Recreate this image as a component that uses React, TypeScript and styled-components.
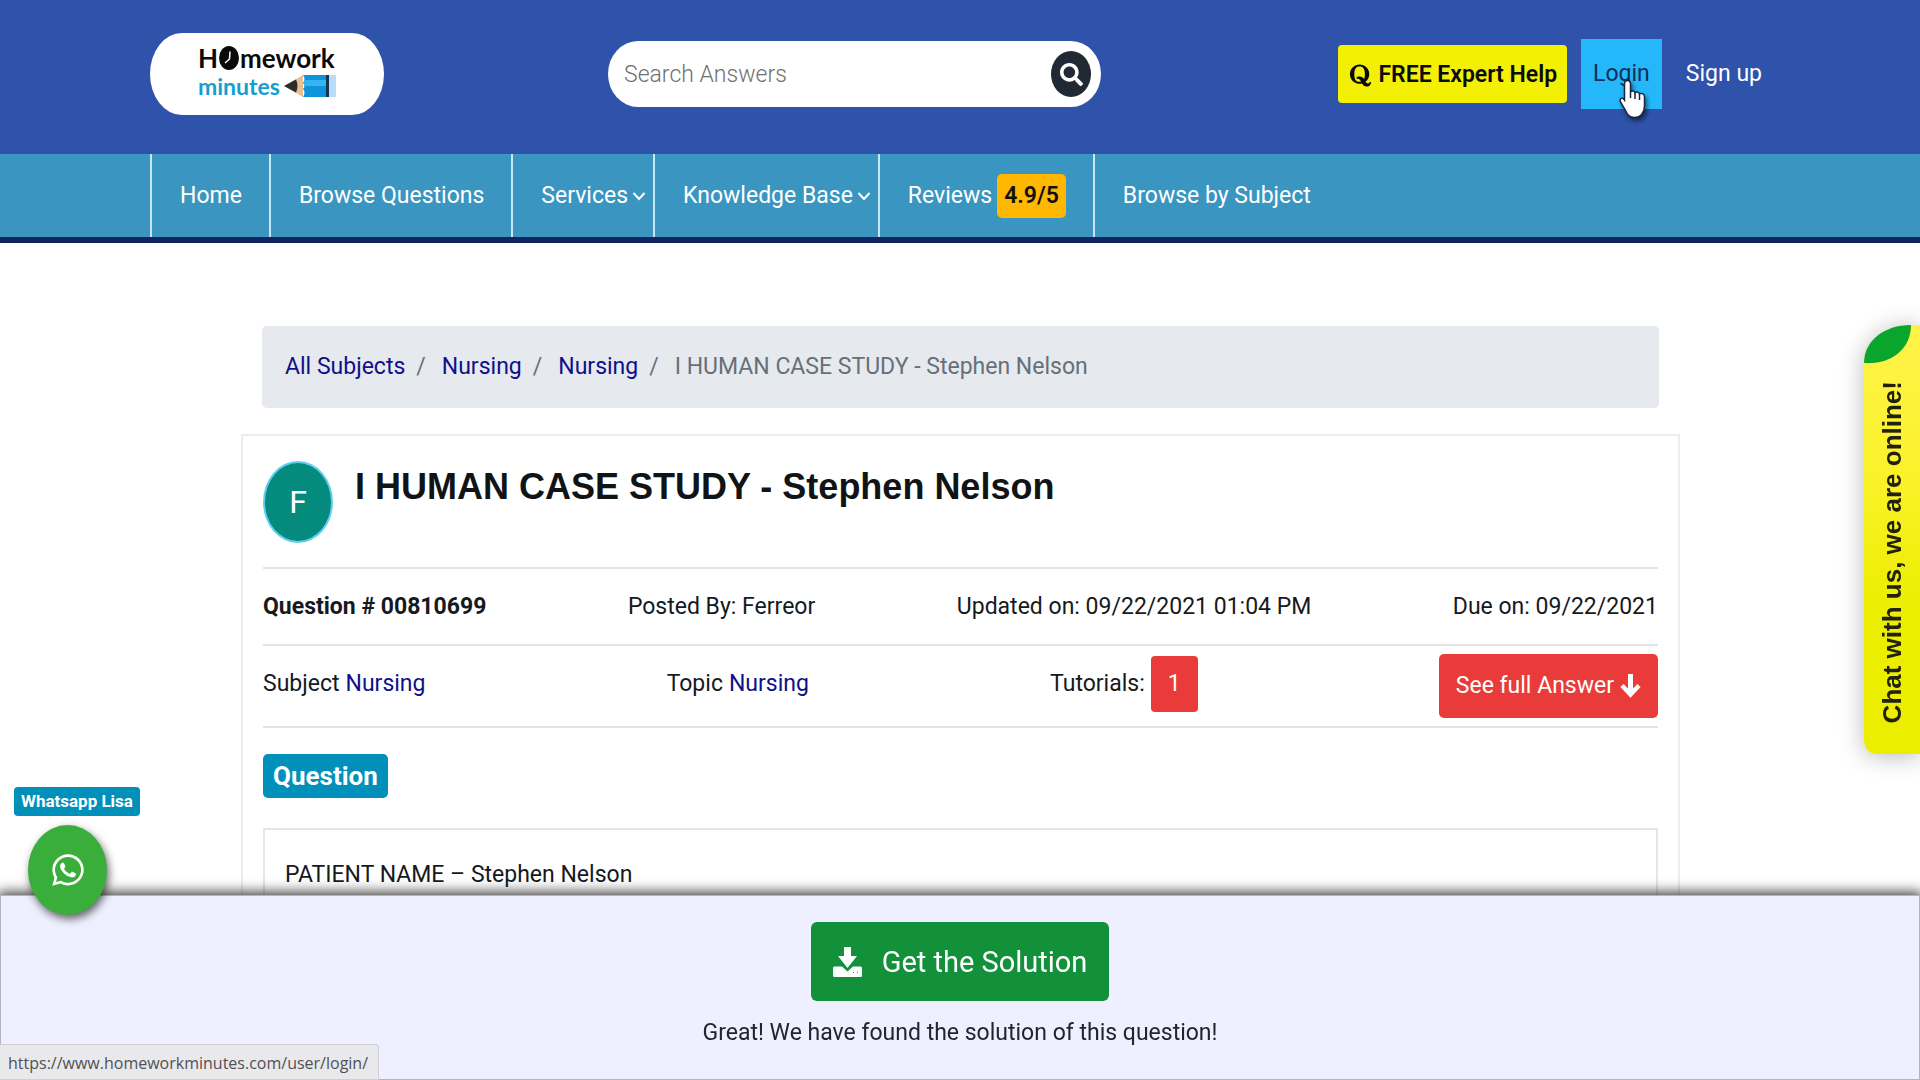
import React from "react";
import styled, { createGlobalStyle } from "styled-components";
import { FaQuora, FaSearch, FaWhatsapp } from "react-icons/fa";

const GlobalStyle = createGlobalStyle`
  *, *::before, *::after { box-sizing: border-box; }
  body {
    margin: 0;
    background: #fff;
    color: #16191d;
    font-family: Roboto, "Liberation Sans", sans-serif;
    font-size: 23px;
    line-height: 34px;
  }
  a { color: #10108a; text-decoration: none; }
  button, input { font: inherit; border: 0; }
  button { cursor: pointer; }
  svg { display: block; }
`;

const Page = styled.div`
  display: flex;
  flex-direction: column;
  min-height: 100vh;
`;

const Container = styled.div`
  width: 100%;
  max-width: 1620px;
  margin: 0 auto;
`;

const Header = styled.header`
  background: #2f52aa;
`;

const HeaderRow = styled(Container)`
  display: grid;
  grid-template-columns: 458px 493px 1fr;
  align-items: center;
  height: 154px;
  padding-bottom: 6px;
`;

const Logo = styled.a`
  display: flex;
  flex-direction: column;
  justify-content: center;
  width: 234px;
  height: 82px;
  padding: 0 0 4px 48px;
  border-radius: 32px / 41px;
  background: #fff;
  color: #0a0a0a;
  font: 700 26px/28px Lato, sans-serif;
`;

const LogoLine = styled.span<{ $blue?: boolean }>`
  display: flex;
  align-items: center;
  gap: ${(p) => (p.$blue ? "4px" : "1px")};
  font-size: ${(p) => (p.$blue ? "23px" : "26px")};
  color: ${(p) => (p.$blue ? "#149fd2" : "#0a0a0a")};
`;

const SearchForm = styled.form`
  display: flex;
  align-items: center;
  height: 66px;
  padding: 0 10px 0 16px;
  border-radius: 30px / 33px;
  background: #fff;
`;

const SearchInput = styled.input`
  flex: 1;
  min-width: 0;
  padding: 2px 0 0;
  background: transparent;
  outline: 0;
  font-weight: 300;
  color: #333;
  &::placeholder { color: #707070; opacity: 1; }
`;

const SearchButton = styled.button`
  display: grid;
  place-items: center;
  width: 40px;
  height: 46px;
  padding: 0;
  border-radius: 50%;
  background: #212a34;
  color: #fff;
`;

const Actions = styled.div`
  display: flex;
  align-items: center;
  justify-content: flex-end;
`;

const ExpertLink = styled.a`
  display: flex;
  align-items: center;
  gap: 5px;
  height: 58px;
  margin-right: 14px;
  padding: 2px 10px 0;
  border-radius: 4px;
  background: #f3f004;
  color: #0b0b0b;
  font-weight: 600;
  white-space: nowrap;
`;

const AccountLink = styled.a<{ $active?: boolean }>`
  position: relative;
  display: flex;
  align-items: center;
  height: 70px;
  margin-left: ${(p) => (p.$active ? "0" : "12px")};
  padding: ${(p) => (p.$active ? "0 12px" : "0 8px 0 12px")};
  background: ${(p) => (p.$active ? "#24b8fb" : "transparent")};
  color: ${(p) => (p.$active ? "#0f2f55" : "#fff")};
  white-space: nowrap;
`;

const Pointer = styled.svg`
  position: absolute;
  left: 38px;
  top: 40px;
  filter: drop-shadow(2px 3px 2px rgba(0, 0, 0, 0.5));
`;

const Nav = styled.nav`
  background: #3a96c0;
  border-bottom: 6px solid #12245c;
`;

const NavList = styled.ul`
  display: flex;
  list-style: none;
  margin: 0 auto;
  padding: 0;
  width: 100%;
  max-width: 1620px;
`;

const NavItem = styled.li<{ $menu?: boolean }>`
  border-left: 2px solid #c6e6f6;
  a {
    display: flex;
    align-items: center;
    gap: ${(p) => (p.$menu ? "4px" : "5px")};
    height: 83px;
    padding: 0 ${(p) => (p.$menu ? "7px" : "27px")} 0 28px;
    color: #fff;
    white-space: nowrap;
  }
`;

const Rating = styled.span`
  height: 44px;
  padding: 0 7px;
  border-radius: 5px;
  background: #ffb700;
  color: #111;
  font-weight: 600;
  line-height: 44px;
`;

const Main = styled.main`
  flex: 1;
  display: flex;
  flex-direction: column;
  width: 100%;
  max-width: 1440px;
  margin: 0 auto;
  padding: 83px 0 0 1px;
`;

const Breadcrumb = styled.ol`
  display: flex;
  align-items: center;
  list-style: none;
  height: 82px;
  margin: 0 21px 26px;
  padding: 0 23px;
  border-radius: 5px;
  background: #e6e9ee;
  color: #66707a;
`;

const Crumb = styled.li`
  & + &::before {
    content: "/";
    padding: 0 16px 0 11px;
  }
`;

const Card = styled.article`
  flex: 1;
  display: flex;
  flex-direction: column;
  padding: 25px 20px 0;
  border: 2px solid #ededed;
  border-bottom: 0;
`;

const TitleRow = styled.div`
  display: flex;
  gap: 22px;
  height: 106px;
`;

const Avatar = styled.span`
  display: grid;
  place-items: center;
  width: 70px;
  height: 82px;
  border: 2px solid #62cdf0;
  border-radius: 50%;
  background: #048b7d;
  color: #fff;
  font-size: 32px;
`;

const Title = styled.h1`
  margin: 0;
  color: #111417;
  font: 700 36px/52px "Liberation Sans", Arial, sans-serif;
`;

const InfoRow = styled.div<{ $tall?: boolean }>`
  display: flex;
  align-items: center;
  justify-content: space-between;
  height: ${(p) => (p.$tall ? "82px" : "77px")};
  border-top: 2px solid #e1e4e8;
`;

const InfoText = styled.span`
  display: flex;
  align-items: center;
  gap: 6px;
  padding-bottom: 4px;
`;

const Count = styled.span`
  padding: 0 17px;
  border-radius: 4px;
  background: #e93b39;
  color: #fff;
  line-height: 56px;
`;

const AnswerButton = styled.button`
  display: flex;
  align-items: center;
  gap: 6px;
  height: 64px;
  padding: 0 17px;
  border-radius: 5px;
  background: #e93b39;
  color: #fff;
`;

const QuestionSection = styled.section`
  flex: 1;
  display: flex;
  flex-direction: column;
  align-items: flex-start;
  padding-top: 26px;
  border-top: 2px solid #e1e4e8;
`;

const QuestionLabel = styled.h2`
  margin: 0 0 30px;
  padding: 0 10px;
  border-radius: 5px;
  background: #0090ba;
  color: #fff;
  font-size: 26px;
  font-weight: 700;
  line-height: 44px;
`;

const QuestionBody = styled.div`
  flex: 1;
  align-self: stretch;
  padding: 28px 20px;
  border: 2px solid #e6e6e6;
  border-bottom: 0;
  p { margin: 0; }
`;

const SolutionBar = styled.aside`
  position: fixed;
  left: 0;
  right: 0;
  bottom: 0;
  display: flex;
  flex-direction: column;
  align-items: center;
  gap: 15px;
  height: 185px;
  padding-top: 26px;
  border: 1px solid #b4b4be;
  background: #eff0ff;
  box-shadow: 0 -1px 12px 2px rgba(0, 0, 0, 0.75);
  color: #22242e;
`;

const SolutionButton = styled.button`
  display: flex;
  align-items: center;
  gap: 20px;
  height: 79px;
  padding: 0 22px;
  border-radius: 6px;
  background: #12903a;
  color: #fff;
  font-size: 29px;
`;

const WhatsappContact = styled.a`
  position: fixed;
  left: 14px;
  bottom: 165px;
  display: flex;
  flex-direction: column;
  gap: 9px;
`;

const WhatsappLabel = styled.span`
  padding: 0 7px;
  border-radius: 4px;
  background: #0090ba;
  color: #fff;
  font-size: 17px;
  font-weight: 700;
  line-height: 29px;
`;

const WhatsappCircle = styled.span`
  display: grid;
  place-items: center;
  width: 79px;
  height: 90px;
  margin-left: 14px;
  border-radius: 50%;
  background: #3aae3a;
  box-shadow: 2px 4px 8px rgba(0, 0, 0, 0.6);
  color: #fff;
`;

const ChatTab = styled.button`
  position: fixed;
  top: 325px;
  right: 0;
  display: flex;
  flex-direction: column;
  width: 56px;
  height: 429px;
  padding: 0;
  border-radius: 47px 0 0 12px / 38px 0 0 14px;
  background: linear-gradient(#fff34a, #fbf22a 35%, #ebee00 65%, #ebee00);
  box-shadow: 0 2px 24px rgba(0, 0, 0, 0.28);
  color: #22220a;
`;

const ChatText = styled.span`
  align-self: center;
  margin-top: 18px;
  writing-mode: vertical-rl;
  rotate: 180deg;
  font: 700 26px/28px "Liberation Sans", Arial, sans-serif;
  white-space: nowrap;
`;

const StatusUrl = styled.div`
  position: fixed;
  left: 0;
  bottom: 0;
  height: 36px;
  padding: 0 10px 0 8px;
  border: 1px solid #d0d0d6;
  border-left: 0;
  border-radius: 0 4px 0 0;
  background: #e9e9ec;
  color: #505056;
  font: 16px/36px "Open Sans", "Noto Sans", sans-serif;
`;

const Chevron = () => (
  <svg width="14" height="12" viewBox="0 0 14 12" fill="none" stroke="currentColor" strokeWidth="2" aria-hidden="true">
    <path d="M1.500 3 7 9l5.500-6" />
  </svg>
);

const ArrowDown = () => (
  <svg width="21" height="24" viewBox="0 0 21 24" fill="none" stroke="currentColor" aria-hidden="true">
    <path d="M10.500 0v19" strokeWidth="5" />
    <path d="M2 11.500 10.500 20.500 19 11.500" strokeWidth="4.500" />
  </svg>
);

const DownloadTray = () => (
  <svg width="29" height="30" viewBox="0 0 29 30" fill="currentColor" aria-hidden="true">
    <path d="M11 0h7v9h6l-9.500 12L5 9h6Z" />
    <path
      fillRule="evenodd"
      d="M1.500 19.500h7.500l5.500 5 5.500-5h7.500q1.500 0 1.500 1.500v7.500q0 1.500-1.500 1.500h-26Q0 30 0 28.500V21q0-1.500 1.500-1.500ZM20 25v1H21v-1ZM24 25v1h1v-1Z"
    />
  </svg>
);

const LogoClock = () => (
  <svg width="20" height="24" viewBox="0 0 20 24" aria-hidden="true">
    <ellipse cx="10" cy="12" rx="10" ry="12" fill="#0a0a0a" />
    <path d="M11 5.500 10.500 13 6 17" fill="none" stroke="#fff" strokeWidth="1.500" />
  </svg>
);

const LogoPencil = () => (
  <svg width="52" height="22" viewBox="0 0 52 22" aria-hidden="true">
    <path d="M0 11 19 0v22Z" fill="#e8bf8d" />
    <path d="M0 11 12 4.500q3 6.500 0 13Z" fill="#2c2c2e" />
    <path d="M19 0h25v22H19q3-5 0-8 3-3 0-6 3-4 0-8Z" fill="#0f94dc" />
    <path d="M20 5h24v6H20Z" fill="#36b4f2" />
    <path d="M42 0h3v22h-3Z" fill="#15344f" />
    <path d="M45 0h7v22h-7Z" fill="#b9dcfb" />
  </svg>
);

const HandPointer = () => (
  <Pointer width="28" height="40" viewBox="0 0 28 40" aria-hidden="true">
    <path
      d="M8.500 1.500c2 0 3 1.300 3 3.500v8c.8-1.600 4-1.500 4.500.7 1-1.300 4-.9 4.500 1.300 1.200-1.100 5-.8 5 3V27c0 6-3.500 11.500-10 11.500-5.500 0-7.500-3.500-9.500-8L1.500 23c-1.500-3.500 1.700-5.300 4-2V5c0-2.200 1-3.500 3-3.500Z"
      fill="#fff"
      stroke="#1a2440"
      strokeWidth="1.500"
    />
    <path d="M11.500 13v6M16 14v6M20.500 15.500V21" stroke="#1a2440" strokeWidth="1.500" />
  </Pointer>
);

const Leaf = () => (
  <svg width="47" height="38" viewBox="0 0 47 38" aria-hidden="true">
    <path d="M0 38C0 16 20 0 47 0 47 24 27 40 0 38Z" fill="#09a52c" />
  </svg>
);

const crumbs = ["All Subjects", "Nursing", "Nursing"];

export default function App() {
  return (
    <Page>
      <GlobalStyle />
      <Header>
        <HeaderRow>
          <Logo href="#" aria-label="Homework minutes">
            <LogoLine>H<LogoClock />mework</LogoLine>
            <LogoLine $blue>minutes<LogoPencil /></LogoLine>
          </Logo>
          <SearchForm role="search" onSubmit={(e) => e.preventDefault()}>
            <SearchInput type="text" aria-label="Search Answers" placeholder="Search Answers" />
            <SearchButton type="submit" aria-label="Search">
              <FaSearch size={23} />
            </SearchButton>
          </SearchForm>
          <Actions>
            <ExpertLink href="#"><FaQuora size={25} />FREE Expert Help</ExpertLink>
            <AccountLink href="#" $active>Login<HandPointer /></AccountLink>
            <AccountLink href="#">Sign up</AccountLink>
          </Actions>
        </HeaderRow>
      </Header>
      <Nav>
        <NavList>
          <NavItem><a href="#">Home</a></NavItem>
          <NavItem><a href="#">Browse Questions</a></NavItem>
          <NavItem $menu><a href="#">Services<Chevron /></a></NavItem>
          <NavItem $menu><a href="#">Knowledge Base<Chevron /></a></NavItem>
          <NavItem><a href="#">Reviews<Rating>4.9/5</Rating></a></NavItem>
          <NavItem><a href="#">Browse by Subject</a></NavItem>
        </NavList>
      </Nav>
      <Main>
        <Breadcrumb>
          {crumbs.map((name, i) => (
            <Crumb key={i}><a href="#">{name}</a></Crumb>
          ))}
          <Crumb>I HUMAN CASE STUDY - Stephen Nelson</Crumb>
        </Breadcrumb>
        <Card>
          <TitleRow>
            <Avatar>F</Avatar>
            <Title>I HUMAN CASE STUDY - Stephen Nelson</Title>
          </TitleRow>
          <InfoRow>
            <strong>Question # 00810699</strong>
            <span>Posted By: Ferreor</span>
            <span>Updated on: 09/22/2021 01:04 PM</span>
            <span>Due on: 09/22/2021</span>
          </InfoRow>
          <InfoRow $tall>
            <InfoText>Subject <a href="#">Nursing</a></InfoText>
            <InfoText>Topic <a href="#">Nursing</a></InfoText>
            <InfoText>Tutorials: <Count>1</Count></InfoText>
            <AnswerButton type="button">See full Answer<ArrowDown /></AnswerButton>
          </InfoRow>
          <QuestionSection>
            <QuestionLabel>Question</QuestionLabel>
            <QuestionBody><p>PATIENT NAME – Stephen Nelson</p></QuestionBody>
          </QuestionSection>
        </Card>
      </Main>
      <SolutionBar>
        <SolutionButton type="button"><DownloadTray />Get the Solution</SolutionButton>
        <span>Great! We have found the solution of this question!</span>
      </SolutionBar>
      <WhatsappContact href="#">
        <WhatsappLabel>Whatsapp Lisa</WhatsappLabel>
        <WhatsappCircle><FaWhatsapp size={36} /></WhatsappCircle>
      </WhatsappContact>
      <ChatTab type="button">
        <Leaf />
        <ChatText>Chat with us, we are online!</ChatText>
      </ChatTab>
      <StatusUrl>https://www.homeworkminutes.com/user/login/</StatusUrl>
    </Page>
  );
}
